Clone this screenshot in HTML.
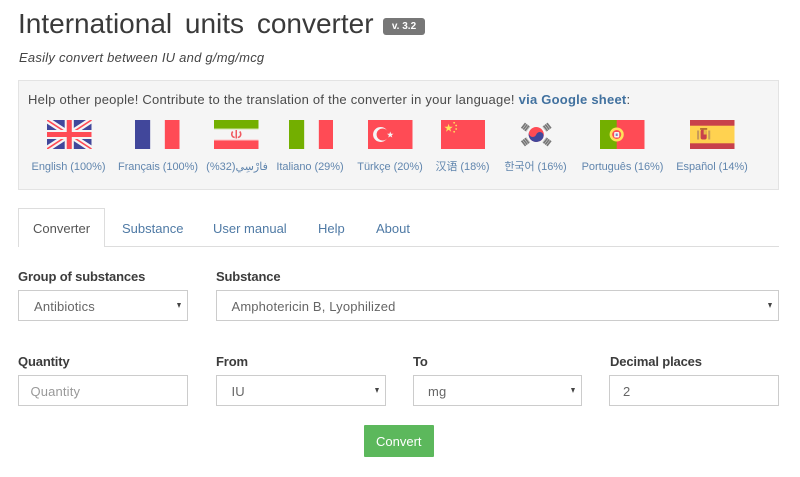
<!DOCTYPE html>
<html><head><meta charset="utf-8"><style>
html,body{margin:0;padding:0;background:#fff}
body{width:800px;height:477px;position:relative;overflow:hidden;font-family:"Liberation Sans","Noto Sans CJK KR",sans-serif;color:#333}
.a{position:absolute;white-space:nowrap}
.lang{position:absolute;top:160px;line-height:15px;font-size:11px;letter-spacing:-.05px;color:#6186ae;transform:translateX(-50%);white-space:nowrap}
.tab{position:absolute;top:221px;line-height:16px;font-size:13px;color:#4f7aa5;white-space:nowrap}
.lab{position:absolute;line-height:16px;font-size:13px;font-weight:bold;color:#3c3c3c;white-space:nowrap;letter-spacing:-.15px}
.f{position:absolute;box-sizing:border-box;height:31px;border:1px solid #ccc;background:#fff;font-size:13px;line-height:29px;color:#666;white-space:nowrap;letter-spacing:.15px}
.f span{position:absolute;top:1px}
.f i{position:absolute;top:12px;right:6px;width:0;height:0;border-left:2.5px solid transparent;border-right:2.5px solid transparent;border-top:5px solid #444}
svg{position:absolute;top:120px;width:44.5px;height:29px}
</style></head><body>
<div class="a" style="left:18px;top:5px;font-size:28px;line-height:38px;color:#3a3a3a;word-spacing:5px">International units converter</div>
<div class="a" style="left:383px;top:18px;width:42px;height:17px;background:#777;border-radius:3px;color:#fff;font-size:10px;font-weight:bold;line-height:17px;text-align:center">v. 3.2</div>
<div class="a" style="left:19px;top:49px;font-size:13px;line-height:17px;font-style:italic;color:#444;letter-spacing:.24px">Easily convert between IU and g/mg/mcg</div>

<div class="a" style="left:18px;top:80px;width:761px;height:110px;box-sizing:border-box;background:#f5f5f5;border:1px solid #e3e3e3"></div>
<div class="a" style="left:28px;top:92px;font-size:13px;line-height:16px;color:#4a4a4a;letter-spacing:.24px">Help other people! Contribute to the translation of the converter in your language! <b style="color:#41719f">via Google sheet</b>:</div>

<svg style="left:47px" viewBox="0 0 44 29" preserveAspectRatio="none"><rect width="44" height="29" fill="#41479b"/><path d="M0 0L44 29M44 0L0 29" stroke="#f5f5f5" stroke-width="6"/><path d="M0 0L44 29M44 0L0 29" stroke="#ff4b55" stroke-width="1.6"/><path d="M22 0V29M0 14.5H44" stroke="#f5f5f5" stroke-width="9"/><path d="M22 0V29M0 14.5H44" stroke="#ff4b55" stroke-width="5"/></svg>
<svg style="left:135px" viewBox="0 0 44 29" preserveAspectRatio="none"><rect width="15" height="29" fill="#41479b"/><rect x="29.500" width="14.500" height="29" fill="#ff4b55"/></svg>
<svg style="left:214px" viewBox="0 0 44 29" preserveAspectRatio="none"><rect width="44" height="8.500" fill="#73af00"/><rect y="20.500" width="44" height="8.500" fill="#ff4b55"/><rect y="8.500" width="44" height="1" fill="#cfe3a8"/><rect y="19.500" width="44" height="1" fill="#ffc4c8"/><path d="M22 10v8.500M18.500 11.500c-1.800 2.500-1 5.500 2 6M25.500 11.500c1.800 2.500 1 5.500-2 6" stroke="#f05a60" stroke-width="1.500" fill="none"/></svg>
<svg style="left:288.500px" viewBox="0 0 44 29" preserveAspectRatio="none"><rect width="15" height="29" fill="#73af00"/><rect x="29.500" width="14.500" height="29" fill="#ff4b55"/></svg>
<svg style="left:368px" viewBox="0 0 44 29" preserveAspectRatio="none"><rect width="44" height="29" fill="#ff4b55"/><circle cx="12.500" cy="14.500" r="7.500" fill="#f5f5f5"/><circle cx="14.500" cy="14.500" r="6" fill="#ff4b55"/><path d="M22 11.500l.8 2.200 2.400.1-1.900 1.400.7 2.300-2-1.300-2 1.300.7-2.300-1.900-1.400 2.400-.1z" fill="#f5f5f5"/></svg>
<svg style="left:440.500px" viewBox="0 0 44 29" preserveAspectRatio="none"><rect width="44" height="29" fill="#ff4b55"/><path d="M7.500 3.800l1 3h3.200l-2.600 1.900 1 3-2.600-1.900-2.600 1.900 1-3-2.600-1.900h3.200z" fill="#ffe15a"/><g fill="#ffe15a"><circle cx="13" cy="2.800" r=".9"/><circle cx="15" cy="5.500" r=".9"/><circle cx="15" cy="9" r=".9"/><circle cx="13" cy="11.800" r=".9"/></g></svg>
<svg style="left:513.700px" viewBox="0 0 44 29" preserveAspectRatio="none"><g transform="rotate(20 22 14.500)"><circle cx="22" cy="14.500" r="7.500" fill="#ff4b55"/><path d="M14.500 14.500a3.750 3.750 0 0 0 7.500 0a3.750 3.750 0 0 1 7.500 0a7.500 7.500 0 0 1-15 0z" fill="#41479b"/></g><g stroke="#777" stroke-width="6.500" stroke-dasharray="1.700 .4" fill="none"><path d="M8.800 5.200L14 9.200"/><path d="M35.200 5.200L30 9.200"/><path d="M8.800 23.800L14 19.800"/><path d="M35.200 23.800L30 19.800"/></g></svg>
<svg style="left:600px" viewBox="0 0 44 29" preserveAspectRatio="none"><rect width="44" height="29" fill="#ff4b55"/><rect width="16.500" height="29" fill="#73af00"/><circle cx="16.500" cy="14.500" r="7" fill="#ffe15a"/><circle cx="16.500" cy="14.500" r="4.500" fill="#ff4b55"/><rect x="14" y="12" width="5" height="5.500" rx="1" fill="#f5f5f5"/><rect x="15.500" y="13.500" width="2" height="2.500" fill="#7a80c0"/></svg>
<svg style="left:690px" viewBox="0 0 44 29" preserveAspectRatio="none"><rect width="44" height="29" fill="#c8414b"/><rect y="5.700" width="44" height="17.600" fill="#ffd250"/><rect x="10.500" y="9.500" width="6" height="10" rx="2" fill="#c8414b"/><rect x="13.500" y="9.500" width="3" height="5" fill="#e8b84a"/><rect x="7" y="10.500" width="2" height="9" fill="#c79a5a"/><rect x="18" y="10.500" width="2" height="9" fill="#c79a5a"/><rect x="10" y="8" width="7" height="1.800" fill="#b5702f"/></svg>

<div class="lang" style="left:68.500px">English (100%)</div>
<div class="lang" style="left:158px">Français (100%)</div>
<div class="lang" style="left:237px;direction:rtl">فارْسِي(32%)</div>
<div class="lang" style="left:310px">Italiano (29%)</div>
<div class="lang" style="left:390px">Türkçe (20%)</div>
<div class="lang" style="left:462.500px;font-family:'Liberation Sans','Noto Sans CJK SC',sans-serif">汉语 (18%)</div>
<div class="lang" style="left:535.500px">한국어 (16%)</div>
<div class="lang" style="left:622.500px">Português (16%)</div>
<div class="lang" style="left:712px">Español (14%)</div>

<div class="a" style="left:18px;top:246px;width:761px;height:1px;background:#ddd"></div>
<div class="a" style="left:18px;top:208px;width:87px;height:39px;box-sizing:border-box;background:#fff;border:1px solid #ddd;border-bottom:none"></div>
<div class="tab" style="left:33px;color:#555">Converter</div>
<div class="tab" style="left:122px">Substance</div>
<div class="tab" style="left:213px">User manual</div>
<div class="tab" style="left:318px">Help</div>
<div class="tab" style="left:376px">About</div>

<div class="lab" style="left:18px;top:269px">Group of substances</div>
<div class="lab" style="left:216px;top:269px">Substance</div>
<div class="f" style="left:18px;top:290px;width:170px"><span style="left:15px">Antibiotics</span><i></i></div>
<div class="f" style="left:215.500px;top:290px;width:563.500px"><span style="left:15px">Amphotericin B, Lyophilized</span><i></i></div>

<div class="lab" style="left:18px;top:354px">Quantity</div>
<div class="lab" style="left:216px;top:354px">From</div>
<div class="lab" style="left:413px;top:354px">To</div>
<div class="lab" style="left:610px;top:354px">Decimal places</div>
<div class="f" style="left:18px;top:375px;width:170px;color:#999"><span style="left:11.500px">Quantity</span></div>
<div class="f" style="left:215.500px;top:375px;width:170px"><span style="left:15px">IU</span><i></i></div>
<div class="f" style="left:413px;top:375px;width:169px"><span style="left:14px">mg</span><i></i></div>
<div class="f" style="left:609px;top:375px;width:170px"><span style="left:13px">2</span></div>

<div class="a" style="left:364px;top:425px;width:69.500px;height:32px;background:#5cb85c;border-radius:1px;color:#fff;font-size:13px;line-height:34px;text-align:center">Convert</div>
</body></html>
